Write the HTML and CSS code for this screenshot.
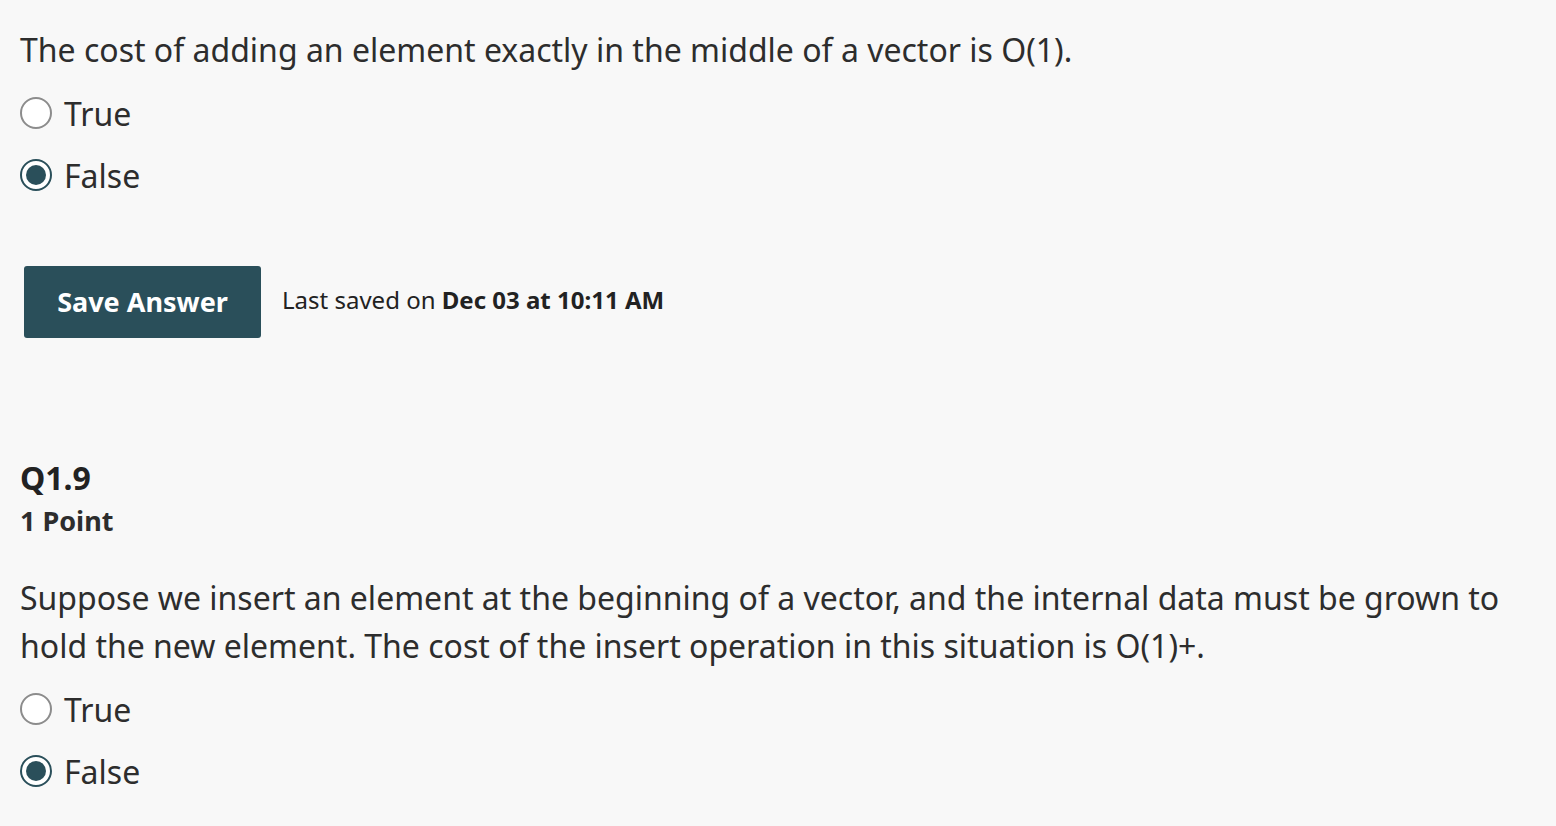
FILE: index.html
```html
<!DOCTYPE html>
<html lang="en">
<head>
<meta charset="utf-8">
<title>Quiz</title>
<link rel="stylesheet" href="styles.css">
</head>
<body>
<main class="page">
  <section class="question">
    <p class="prompt">The cost of adding an element exactly in the middle of a vector is O(1).</p>
    <div class="options">
      <label class="option"><span class="radio"></span><span class="opt-text">True</span></label>
      <label class="option"><span class="radio checked"></span><span class="opt-text">False</span></label>
    </div>
    <div class="save-row">
      <button class="save-btn" type="button">Save Answer</button>
      <span class="saved">Last saved on <strong>Dec 03 at 10:11 AM</strong></span>
    </div>
  </section>

  <section class="question q2">
    <h2 class="q-title">Q1.9</h2>
    <div class="q-points">1 Point</div>
    <p class="prompt prompt-2">Suppose we insert an element at the beginning of a vector, and the internal data must be grown to hold the new element. The cost of the insert operation in this situation is O(1)+.</p>
    <div class="options">
      <label class="option"><span class="radio"></span><span class="opt-text">True</span></label>
      <label class="option"><span class="radio checked"></span><span class="opt-text">False</span></label>
    </div>
  </section>
</main>
</body>
</html>
```

FILE: styles.css
```css
html, body {
  margin: 0;
  padding: 0;
  background: #f8f8f8;
}

body {
  font-family: "Noto Sans", "Open Sans", "DejaVu Sans", sans-serif;
  color: #2d2d2d;
}

.page {
  padding: 26px 0 0 20px;
  width: 1500px;
}

.question {
  display: flex;
  flex-direction: column;
}

.prompt {
  margin: 0;
  font-size: 32px;
  line-height: 48px;
}

.options {
  display: flex;
  flex-direction: column;
  gap: 14px;
  margin-top: 15px;
}

.option {
  display: flex;
  align-items: center;
  gap: 12px;
  height: 48px;
  font-size: 32px;
}

.radio {
  box-sizing: border-box;
  width: 32px;
  height: 32px;
  border-radius: 50%;
  border: 2px solid #8c8c8c;
  background: #ffffff;
  display: flex;
  align-items: center;
  justify-content: center;
}

.radio.checked {
  border-color: #2a4f5a;
}

.radio.checked::after {
  content: "";
  width: 20px;
  height: 20px;
  border-radius: 50%;
  background: #2a4f5a;
}

.save-row {
  display: flex;
  align-items: center;
  gap: 21px;
  margin-top: 67px;
  padding-left: 4px;
}

.save-btn {
  height: 72px;
  width: 237px;
  border: none;
  border-radius: 3px;
  background: #2a4f5a;
  color: #ffffff;
  font-family: inherit;
  font-size: 27px;
  font-weight: 700;
  padding: 0 0 2px 0;
}

.saved {
  font-size: 24px;
  line-height: 32px;
  padding-bottom: 4px;
  color: #222222;
}

.saved strong {
  font-weight: 700;
}

.q2 {
  margin-top: 118px;
}

.q-title {
  margin: 0;
  font-size: 32px;
  line-height: 44px;
  font-weight: 700;
  color: #222222;
}

.q-points {
  font-size: 27px;
  line-height: 42px;
  font-weight: 700;
  color: #2d2d2d;
}

.prompt-2 {
  margin-top: 32px;
}
```
